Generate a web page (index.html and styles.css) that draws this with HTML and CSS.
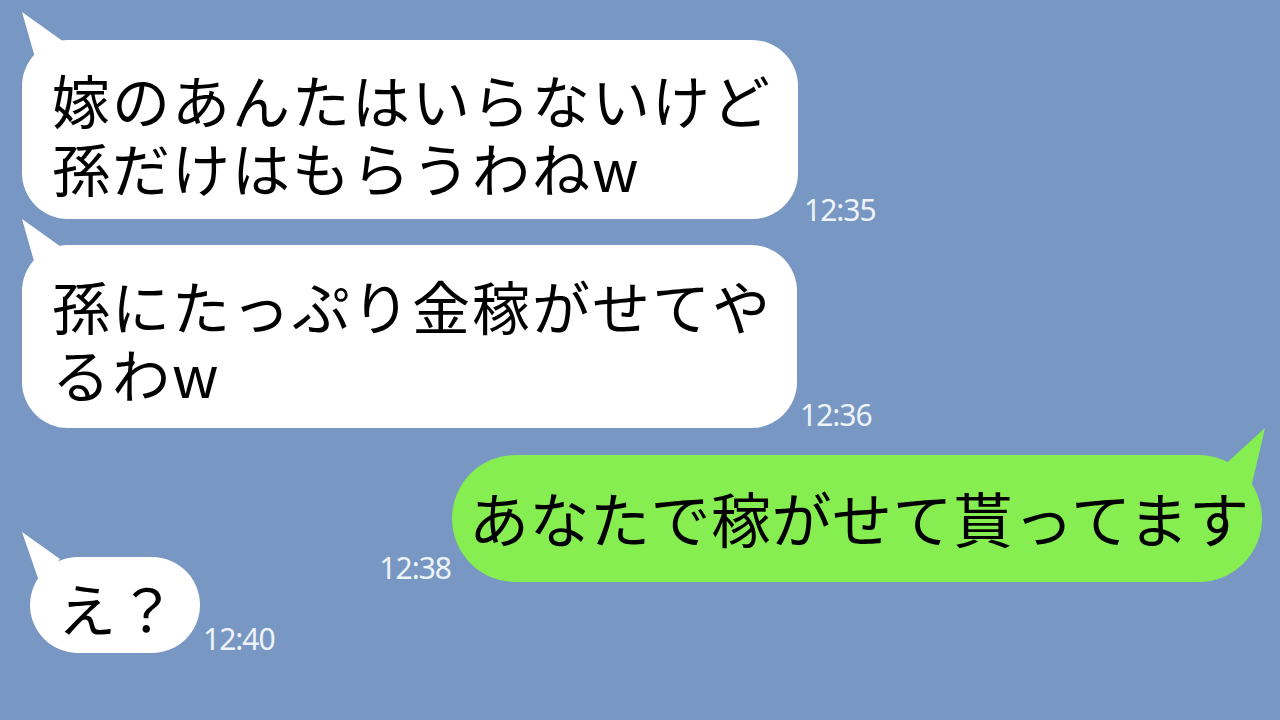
FILE: index.html
```html
<!DOCTYPE html>
<html lang="ja">
<head>
<meta charset="utf-8">
<title>LINE</title>
<link rel="stylesheet" href="styles.css">
</head>
<body>
<main class="chat">
  <div class="row row-1">
    <div class="bubble bubble-in b1"><span class="tail tail-in"></span>嫁のあんたはいらないけど<br>孫だけはもらうわねw</div>
    <time class="stamp s1">12:35</time>
  </div>
  <div class="row row-2">
    <div class="bubble bubble-in b2"><span class="tail tail-in"></span>孫にたっぷり金稼がせてや<br>るわw</div>
    <time class="stamp s2">12:36</time>
  </div>
  <div class="row row-3">
    <time class="stamp s3">12:38</time>
    <div class="bubble bubble-out b3"><span class="tail tail-out"></span>あなたで稼がせて貰ってます</div>
  </div>
  <div class="row row-4">
    <div class="bubble bubble-in b4"><span class="tail tail-in4"></span>え？</div>
    <time class="stamp s4">12:40</time>
  </div>
</main>
</body>
</html>
```
FILE: styles.css
```css
html, body {
  margin: 0;
  padding: 0;
}
body {
  width: 1280px;
  height: 720px;
  overflow: hidden;
  background: #7897c2;
  font-family: "Noto Sans CJK JP", "Noto Sans", sans-serif;
}
.chat {
  display: flex;
  flex-direction: column;
  padding-top: 40px;
}
.row {
  display: flex;
  align-items: flex-end;
}
.row-1 { padding-left: 22px; }
.row-2 { padding-left: 22px; margin-top: 26px; }
.row-3 { justify-content: flex-end; padding-right: 18px; margin-top: 27px; }
.row-4 { padding-left: 30px; margin-top: -25px; }

.bubble {
  position: relative;
  color: #000;
  font-size: 58px;
  line-height: 68px;
  letter-spacing: 2px;
  white-space: nowrap;
  background: #fff;
}
.b1 {
  width: 716px;
  height: 136px;
  padding: 25px 30px 18px 30px;
  border-radius: 46px;
}
.b2 {
  width: 716px;
  height: 136px;
  padding: 26px 29px 21px 30px;
  border-radius: 46px;
}
.b3 {
  background: #87ee51;
  font-size: 60px;
  letter-spacing: 0.5px;
  height: 68px;
  width: 793px;
  padding: 28px 0 31px 17px;
  border-radius: 64px;
}
.b4 {
  width: 122px;
  height: 68px;
  padding: 16px 20px 12px 28px;
  border-radius: 48px;
}

.tail {
  position: absolute;
  display: block;
  background: inherit;
}
.tail-in {
  left: 0;
  top: -28px;
  width: 42px;
  height: 56px;
  clip-path: polygon(0 0, 42px 30px, 16px 56px);
}
.b2 .tail-in { top: -26px; }
.tail-in4 {
  left: -8px;
  top: -25px;
  width: 38px;
  height: 52px;
  clip-path: polygon(0 0, 38px 27px, 18px 52px);
}
.tail-out {
  right: -3px;
  top: -27px;
  width: 46px;
  height: 60px;
  clip-path: polygon(100% 0, 0 42px, 32px 60px);
}

.stamp {
  color: #eef3fa;
  font-family: "Noto Sans", "DejaVu Sans", sans-serif;
  font-size: 30px;
  line-height: 30px;
  letter-spacing: -1px;
}
.s1 { margin-left: 6px; margin-bottom: -6px; }
.s2 { margin-left: 3px; margin-bottom: -2px; }
.s3 { margin-right: 1px; margin-bottom: -1px; }
.s4 { margin-left: 3px; margin-bottom: -1px; }
```
